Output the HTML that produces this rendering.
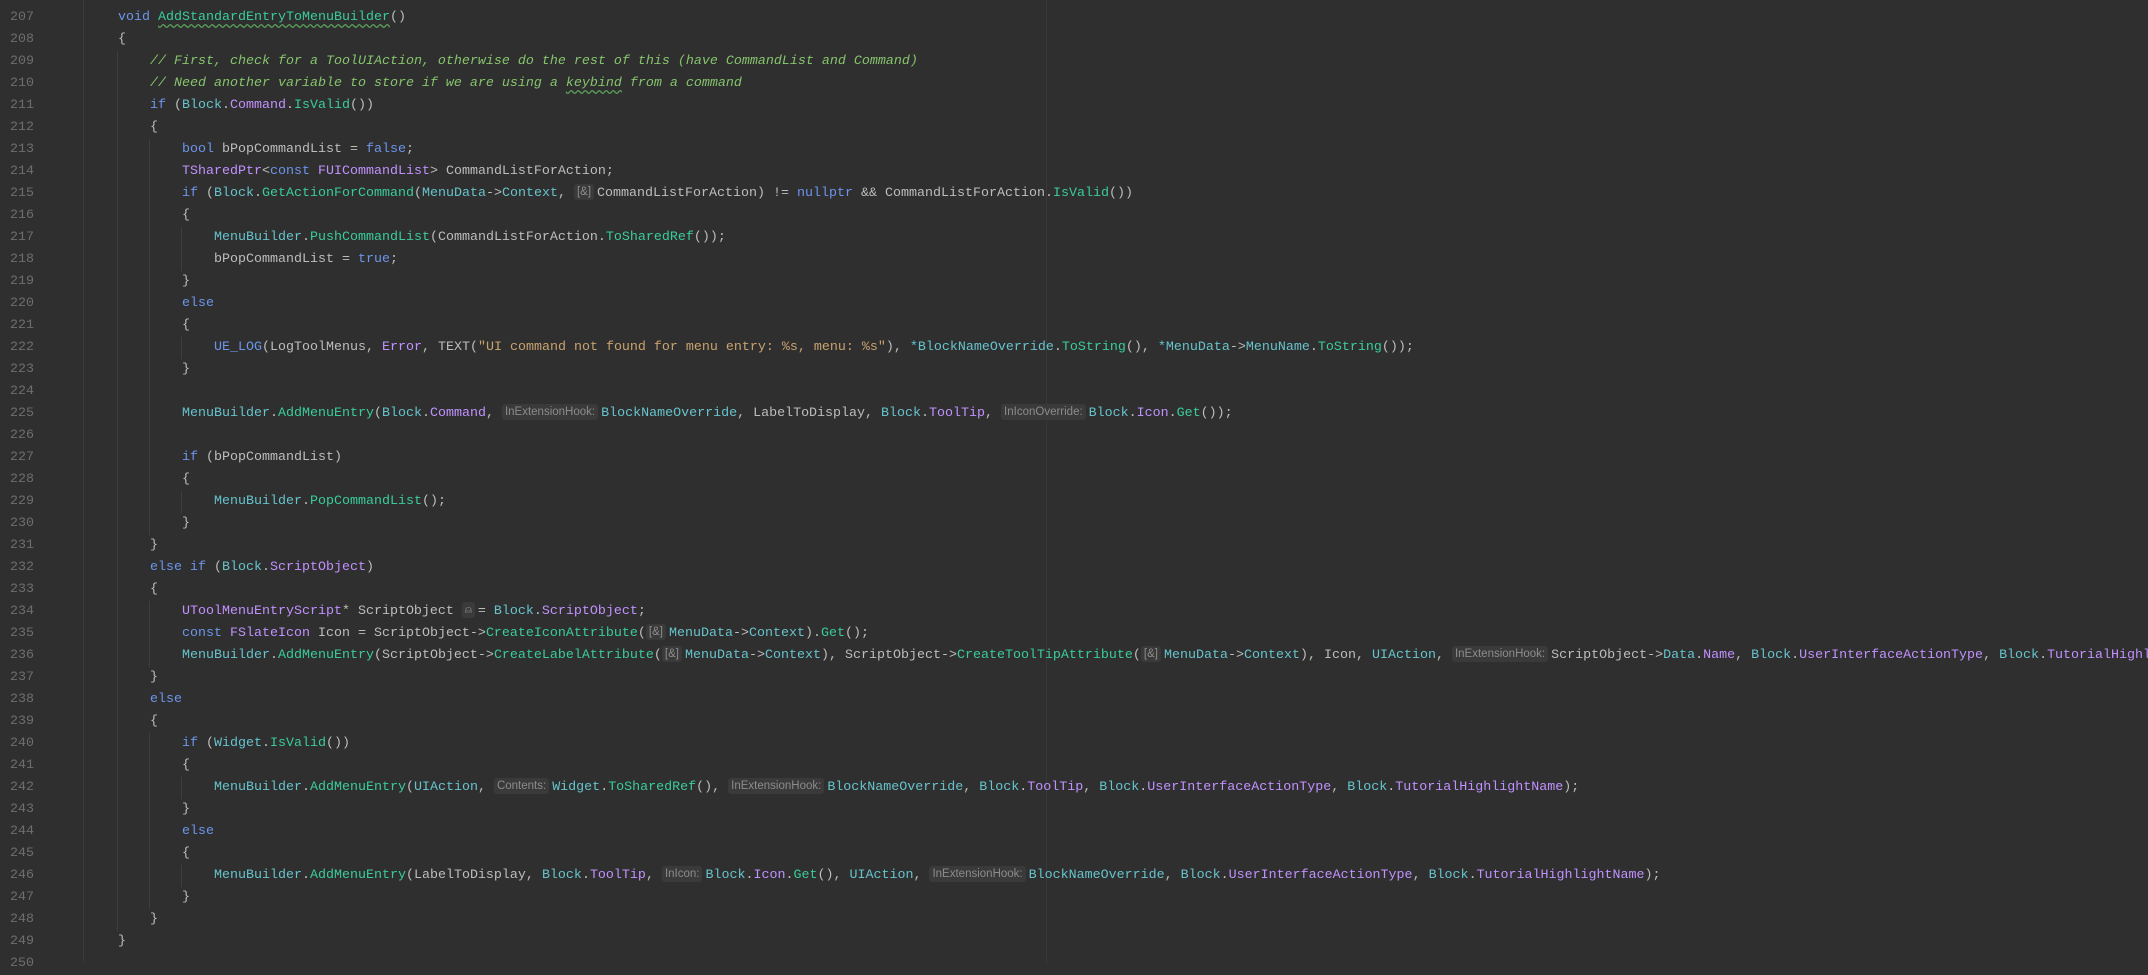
<!DOCTYPE html>
<html><head><meta charset="utf-8"><style>
html,body{margin:0;padding:0;background:#2f2f2f;width:2148px;height:963px;overflow:hidden}
.code{position:absolute;left:86px;top:7px;margin:0;font-family:"Liberation Mono",monospace;font-size:13.33px;line-height:22px;color:#bdbdbd;white-space:pre}
.nums{position:absolute;left:0;width:34px;top:7px;margin:0;font-family:"Liberation Mono",monospace;font-size:13.33px;line-height:22px;color:#6e6e6e;text-align:right;white-space:pre}
.k{color:#6c95eb}.f{color:#66c3cc}.m{color:#39cc9b}.p{color:#c191ff}.s{color:#c9a26d}.c{color:#85c46c;font-style:italic}
.h{display:inline-block;font-family:"Liberation Sans",sans-serif;font-size:11.5px;line-height:16px;color:#8c8c8c;background:#3a3a3a;padding:0 3px;margin-right:3px;border-radius:3px;vertical-align:1px}
.w{text-decoration:underline wavy #5a9e5a;text-underline-offset:3px}
.g{position:absolute;width:1px;background:#3e3e3e}
</style></head><body>
<div class="g" style="left:83px;top:0;height:963px;background:#3a3a3a"></div>
<div class="g" style="left:1046px;top:0;height:963px;background:#393939"></div>
<div class="g" style="left:117px;top:51px;height:880px"></div>
<div class="g" style="left:149px;top:139px;height:396px"></div>
<div class="g" style="left:149px;top:601px;height:66px"></div>
<div class="g" style="left:149px;top:733px;height:176px"></div>
<div class="g" style="left:181px;top:227px;height:44px"></div>
<div class="g" style="left:181px;top:337px;height:22px"></div>
<div class="g" style="left:181px;top:491px;height:22px"></div>
<div class="g" style="left:181px;top:777px;height:22px"></div>
<div class="g" style="left:181px;top:865px;height:22px"></div>
<pre class="nums">207
208
209
210
211
212
213
214
215
216
217
218
219
220
221
222
223
224
225
226
227
228
229
230
231
232
233
234
235
236
237
238
239
240
241
242
243
244
245
246
247
248
249
250</pre>
<pre class="code">    <span class="k">void</span> <span class="m w">AddStandardEntryToMenuBuilder</span>()
    {
        <span class="c">// First, check for a ToolUIAction, otherwise do the rest of this (have CommandList and Command)</span>
        <span class="c">// Need another variable to store if we are using a <span class="w">keybind</span> from a command</span>
        <span class="k">if</span> (<span class="f">Block</span>.<span class="p">Command</span>.<span class="m">IsValid</span>())
        {
            <span class="k">bool</span> bPopCommandList = <span class="k">false</span>;
            <span class="p">TSharedPtr</span>&lt;<span class="k">const</span> <span class="p">FUICommandList</span>&gt; CommandListForAction;
            <span class="k">if</span> (<span class="f">Block</span>.<span class="m">GetActionForCommand</span>(<span class="f">MenuData</span>-&gt;<span class="f">Context</span>, <span class="h">[&amp;]</span>CommandListForAction) != <span class="k">nullptr</span> &amp;&amp; CommandListForAction.<span class="m">IsValid</span>())
            {
                <span class="f">MenuBuilder</span>.<span class="m">PushCommandList</span>(CommandListForAction.<span class="m">ToSharedRef</span>());
                bPopCommandList = <span class="k">true</span>;
            }
            <span class="k">else</span>
            {
                <span class="k">UE_LOG</span>(LogToolMenus, <span class="p">Error</span>, TEXT(<span class="s">"UI command not found for menu entry: %s, menu: %s"</span>), <span class="f">*BlockNameOverride</span>.<span class="m">ToString</span>(), <span class="f">*MenuData</span>-&gt;<span class="f">MenuName</span>.<span class="m">ToString</span>());
            }

            <span class="f">MenuBuilder</span>.<span class="m">AddMenuEntry</span>(<span class="f">Block</span>.<span class="p">Command</span>, <span class="h">InExtensionHook:</span><span class="f">BlockNameOverride</span>, LabelToDisplay, <span class="f">Block</span>.<span class="p">ToolTip</span>, <span class="h">InIconOverride:</span><span class="f">Block</span>.<span class="p">Icon</span>.<span class="m">Get</span>());

            <span class="k">if</span> (bPopCommandList)
            {
                <span class="f">MenuBuilder</span>.<span class="m">PopCommandList</span>();
            }
        }
        <span class="k">else if</span> (<span class="f">Block</span>.<span class="p">ScriptObject</span>)
        {
            <span class="p">UToolMenuEntryScript</span>* ScriptObject <span class="h">⍝</span>= <span class="f">Block</span>.<span class="p">ScriptObject</span>;
            <span class="k">const</span> <span class="p">FSlateIcon</span> Icon = ScriptObject-&gt;<span class="m">CreateIconAttribute</span>(<span class="h">[&amp;]</span><span class="f">MenuData</span>-&gt;<span class="f">Context</span>).<span class="m">Get</span>();
            <span class="f">MenuBuilder</span>.<span class="m">AddMenuEntry</span>(ScriptObject-&gt;<span class="m">CreateLabelAttribute</span>(<span class="h">[&amp;]</span><span class="f">MenuData</span>-&gt;<span class="f">Context</span>), ScriptObject-&gt;<span class="m">CreateToolTipAttribute</span>(<span class="h">[&amp;]</span><span class="f">MenuData</span>-&gt;<span class="f">Context</span>), Icon, <span class="f">UIAction</span>, <span class="h">InExtensionHook:</span>ScriptObject-&gt;<span class="f">Data</span>.<span class="p">Name</span>, <span class="f">Block</span>.<span class="p">UserInterfaceActionType</span>, <span class="f">Block</span>.<span class="p">TutorialHighlightName</span>);
        }
        <span class="k">else</span>
        {
            <span class="k">if</span> (<span class="f">Widget</span>.<span class="m">IsValid</span>())
            {
                <span class="f">MenuBuilder</span>.<span class="m">AddMenuEntry</span>(<span class="f">UIAction</span>, <span class="h">Contents:</span><span class="f">Widget</span>.<span class="m">ToSharedRef</span>(), <span class="h">InExtensionHook:</span><span class="f">BlockNameOverride</span>, <span class="f">Block</span>.<span class="p">ToolTip</span>, <span class="f">Block</span>.<span class="p">UserInterfaceActionType</span>, <span class="f">Block</span>.<span class="p">TutorialHighlightName</span>);
            }
            <span class="k">else</span>
            {
                <span class="f">MenuBuilder</span>.<span class="m">AddMenuEntry</span>(LabelToDisplay, <span class="f">Block</span>.<span class="p">ToolTip</span>, <span class="h">InIcon:</span><span class="f">Block</span>.<span class="p">Icon</span>.<span class="m">Get</span>(), <span class="f">UIAction</span>, <span class="h">InExtensionHook:</span><span class="f">BlockNameOverride</span>, <span class="f">Block</span>.<span class="p">UserInterfaceActionType</span>, <span class="f">Block</span>.<span class="p">TutorialHighlightName</span>);
            }
        }
    }
</pre>
</body></html>
